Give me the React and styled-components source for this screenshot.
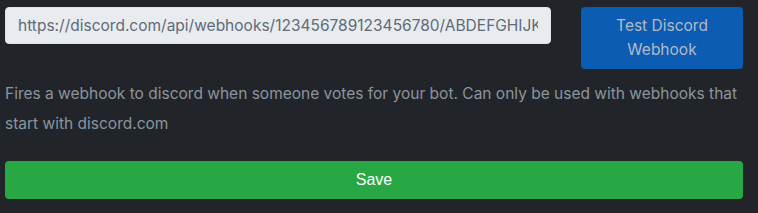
import React from "react";
import styled, { createGlobalStyle } from "styled-components";

const GlobalStyle = createGlobalStyle`
  html, body {
    margin: 0;
    padding: 0;
    background: #212529;
  }
  * { box-sizing: border-box; }
`;

const Page = styled.div`
  width: 758px;
  height: 213px;
  padding: 7px 15px 0 5px;
  font-family: Inter, "Noto Sans", sans-serif;
`;

const Row = styled.div`
  display: flex;
  align-items: flex-start;
  gap: 30px;
`;

const UrlInput = styled.input`
  flex: 1;
  height: 37px;
  padding: 0 12px;
  border: 1px solid #dfe3e7;
  border-radius: 4px;
  background: #e9ecef;
  color: #5f6b78;
  font-family: inherit;
  font-size: 15.5px;
  outline: none;
`;

const TestButton = styled.button`
  width: 162px;
  height: 62px;
  border: none;
  border-radius: 4px;
  background: #0c5cb4;
  color: #b3bac4;
  font-family: inherit;
  font-size: 15.5px;
  line-height: 24px;
  padding: 0 18px;
`;

const Hint = styled.p`
  margin: 10px 0 0;
  color: #8c949c;
  font-size: 15.5px;
  line-height: 30px;
`;

const SaveButton = styled.button`
  display: block;
  width: 100%;
  height: 38px;
  margin-top: 22px;
  border: none;
  border-radius: 4px;
  background: #28a745;
  color: #fff;
  font-family: "Liberation Sans", Arial, sans-serif;
  font-size: 16px;
`;

export default function App() {
  return (
    <>
      <GlobalStyle />
      <Page>
        <Row>
          <UrlInput
            readOnly
            value="https://discord.com/api/webhooks/123456789123456780/ABDEFGHIJKLMNOP"
          />
          <TestButton>Test Discord Webhook</TestButton>
        </Row>
        <Hint>
          Fires a webhook to discord when someone votes for your bot. Can only be used with
          webhooks that start with discord.com
        </Hint>
        <SaveButton>Save</SaveButton>
      </Page>
    </>
  );
}
